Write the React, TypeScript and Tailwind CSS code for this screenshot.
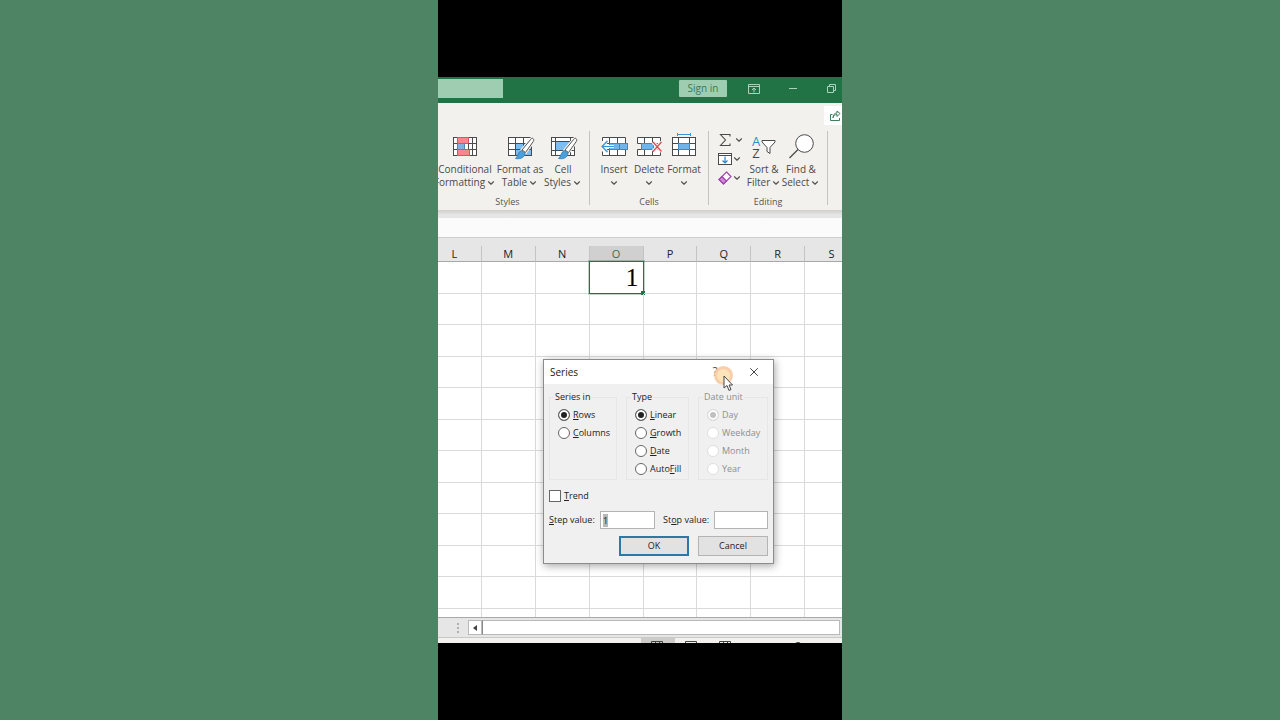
import { useState } from 'react';
import type { ReactNode } from 'react';
import { ChevronDown, X } from 'lucide-react';

const COLUMNS = ['L', 'M', 'N', 'O', 'P', 'Q', 'R', 'S'];
const ROWS = [1, 2, 3, 4, 5, 6, 7, 8, 9, 10, 11, 12];

function Chevron() {
  return <ChevronDown className="h-[10px] w-[10px] shrink-0 text-[#555]" strokeWidth={2.8} />;
}

/* ---------- ribbon icons ---------- */

function Icon({ children }: { children: ReactNode }) {
  return (
    <svg viewBox="0 0 32 32" className="h-8 w-8 shrink-0" fill="none" stroke="#4a4a4a" strokeWidth="1">
      {children}
    </svg>
  );
}

function Brush() {
  return (
    <>
      <path d="M29 7.500C30 8.500 30 9.500 29.200 10.600L21.500 21.500L18 19L26.800 8.300C27.600 7.300 28.300 7 29 7.500Z" fill="#fff" stroke="#f2f1ee" strokeWidth="3" />
      <path d="M29 7.500C30 8.500 30 9.500 29.200 10.600L21.500 21.500L18 19L26.800 8.300C27.600 7.300 28.300 7 29 7.500Z" fill="#fff" stroke="#555" />
      <path d="M17.500 19.500L21 22C21 26 17 28.500 11.500 27.500C14 26 14 20.500 17.500 19.500Z" fill="#4ba0dc" stroke="#2b7ab8" strokeWidth="0.8" />
    </>
  );
}

function ConditionalIcon() {
  return (
    <Icon>
      <rect x="4.500" y="6.500" width="23" height="18" fill="#fff" />
      <path d="M23.500 6.500V24.500M4.500 12.500H27.500M4.500 18.500H27.500" />
      <rect x="8.500" y="6.500" width="11" height="6" fill="#f8868d" stroke="#d8555f" />
      <rect x="8.500" y="12.500" width="7" height="6" fill="#86aee0" stroke="#5a80b8" />
      <rect x="8.500" y="18.500" width="12" height="6" fill="#f8868d" stroke="#d8555f" />
      <path d="M19.500 12.500V18.500" />
    </Icon>
  );
}

function FormatTableIcon() {
  return (
    <Icon>
      <rect x="4.500" y="6.500" width="23" height="18" fill="#fff" />
      <rect x="12" y="12.500" width="15.500" height="12" fill="#7fbdf0" stroke="none" />
      <path d="M11.500 6.500V24.500M19.500 6.500V24.500M4.500 12.500H27.500M4.500 18.500H27.500" />
      <rect x="4.500" y="6.500" width="23" height="18" />
      <Brush />
    </Icon>
  );
}

function CellStylesIcon() {
  return (
    <Icon>
      <rect x="4.500" y="6.500" width="23" height="18" fill="#fff" />
      <rect x="9" y="10.500" width="14.500" height="9" fill="#7fbdf0" stroke="none" />
      <path d="M8.500 6.500V24.500M23.500 6.500V24.500M4.500 10.500H27.500M4.500 19.500H27.500" />
      <Brush />
    </Icon>
  );
}

function InsertIcon() {
  return (
    <Icon>
      <path d="M4.500 10V6.500H27.500V24.500H4.500V20.500" fill="#fff" />
      <path d="M11.500 6.500V24.500M19.500 6.500V24.500M6 12.500H27.500M6 18.500H27.500" />
      <rect x="11.500" y="12.500" width="18" height="6" fill="#6fb4ea" stroke="#3f87be" />
      <path d="M21.500 12.500V18.500" stroke="#3f87be" />
      <path d="M16 15.500H4M9.500 10L4 15.500L9.500 21" stroke="#f2f1ee" strokeWidth="3" />
      <path d="M16 15.500H4M9.500 10L4 15.500L9.500 21" stroke="#3a93d5" strokeWidth="1.200" />
    </Icon>
  );
}

function DeleteIcon() {
  return (
    <Icon>
      <path d="M4.500 6.500H27.500V12.500H4.500ZM4.500 18.500H27.500V24.500H4.500Z" fill="#fff" />
      <path d="M11.500 6.500V12.500M19.500 6.500V12.500M11.500 18.500V24.500M19.500 18.500V24.500" />
      <rect x="8.500" y="12.500" width="12" height="6" fill="#6fb4ea" stroke="#3f87be" />
      <path d="M20 11L28.500 20.500M28.500 11L20 20.500" stroke="#f2f1ee" strokeWidth="3.500" />
      <path d="M20 11L28.500 20.500M28.500 11L20 20.500" stroke="#dc4a50" strokeWidth="1.200" />
    </Icon>
  );
}

function FormatIcon() {
  return (
    <Icon>
      <path d="M9.500 3.500H22.500M9.500 2V5M22.500 2V5" stroke="#3a93d5" />
      <rect x="4.500" y="6.500" width="23" height="18" fill="#fff" />
      <path d="M10.500 6.500V24.500M21.500 6.500V24.500M4.500 12.500H27.500M4.500 18.500H27.500" />
      <rect x="10.500" y="12.500" width="11" height="6" fill="#6fb4ea" stroke="#3f87be" />
    </Icon>
  );
}

function FindIcon() {
  return (
    <Icon>
      <circle cx="19.500" cy="12.500" r="8.800" fill="#fff" />
      <path d="M13 18.500L4.500 27" strokeWidth="1.300" />
    </Icon>
  );
}

function SortIcon() {
  return (
    <span className="flex h-8 items-center justify-center gap-px">
      <span className="flex flex-col text-center text-[13px] leading-3">
        <span className="text-[#2e8fc4]">A</span>
        <span className="text-[#444]">Z</span>
      </span>
      <svg viewBox="0 0 15 16" className="h-4 w-[15px]" fill="#fff" stroke="#4a4a4a" strokeWidth="1">
        <path d="M1 1.500H14V3L9 8.500V14.500L6 12.500V8.500L1 3Z" />
      </svg>
    </span>
  );
}

function SumIcon() {
  return (
    <svg viewBox="0 0 14 14" className="h-[14px] w-[14px]" fill="none" stroke="#4a4a4a" strokeWidth="1.100">
      <path d="M12 3.500V1.500H2.500L7.500 7L2.500 12.500H12V10.500" />
    </svg>
  );
}

function FillIcon() {
  return (
    <svg viewBox="0 0 14 14" className="h-[14px] w-[14px]" fill="#fff" stroke="#4a4a4a" strokeWidth="1">
      <rect x="0.500" y="1.500" width="13" height="11" />
      <path d="M0.500 3.500H13.500" />
      <path d="M7 4.500V11M4.500 8.500L7 11L9.500 8.500" fill="none" stroke="#2b84c6" strokeWidth="1.200" />
    </svg>
  );
}

function ClearIcon() {
  return (
    <svg viewBox="0 0 14 14" className="h-[14px] w-[14px]" fill="#fff" stroke="#9b3fa8" strokeWidth="1.100">
      <path d="M8.500 1L13 5.500L5.500 13L1 8.500Z" />
      <path d="M4 5.500L8.500 10L5.500 13L1 8.500Z" fill="#cf8bd8" />
    </svg>
  );
}

/* ---------- ribbon ---------- */

function RibbonButton({ icon, lines, className }: { icon: ReactNode; lines: string[]; className: string }) {
  return (
    <button className={`flex shrink-0 flex-col items-center text-[10px] leading-[13px] whitespace-nowrap text-[#4a4a4a] ${className}`}>
      {icon}
      <span>{lines[0]}</span>
      <span className="flex h-[13px] items-center gap-px">
        {lines[1]}
        <Chevron />
      </span>
    </button>
  );
}

function RibbonGroup({ label, className, children }: { label: string; className: string; children: ReactNode }) {
  return (
    <div className={`flex shrink-0 flex-col ${className}`}>
      <div className="flex">{children}</div>
      <p className="mt-[7px] text-center text-[9px] leading-3 text-[#555]">{label}</p>
    </div>
  );
}

function Separator() {
  return <div className="h-[74px] w-px shrink-0 bg-[#c6c4c2]" />;
}

function TitleBar() {
  return (
    <header className="flex h-[26px] items-center bg-[#217346] pb-[3px] text-[#a9d3bb]">
      <input aria-label="Search" className="h-[19px] w-[65px] bg-[#9fcdb2]" />
      <button className="mr-[7px] ml-auto h-[17px] w-12 rounded-[1px] bg-[#9fcdb2] text-[10px] leading-[17px] text-[#3c7a58]">Sign in</button>
      <button aria-label="Ribbon display options" className="flex w-[39px] justify-center">
        <svg viewBox="0 0 12 10" className="h-[10px] w-3" fill="none" stroke="currentColor">
          <path d="M0.500 0.500H11.500V9.500H0.500ZM0.500 2.500H11.500M6 8.500V4.500M4 6L6 4L8 6" />
        </svg>
      </button>
      <button aria-label="Minimize" className="flex w-[39px] justify-center">
        <span className="h-px w-2 bg-[#a9d3bb]" />
      </button>
      <button aria-label="Restore" className="flex w-[30px] justify-center pl-2">
        <svg viewBox="0 0 10 10" className="h-[10px] w-[10px]" fill="none" stroke="currentColor">
          <path d="M1.500 2.500H7.500V8.500H1.500ZM3.500 2.500V0.500H9.500V6.500H7.500" />
        </svg>
      </button>
    </header>
  );
}

function Ribbon() {
  return (
    <div className="h-[107px] overflow-hidden bg-[#f2f1ee]">
      <div className="flex h-7 justify-end pt-[3px]">
        <button aria-label="Share" className="flex h-[19px] w-[18px] items-center justify-center bg-white pl-[3px]">
          <svg viewBox="0 0 12 12" className="h-3 w-3" fill="none" stroke="#3d7d5b">
            <path d="M3.500 4.500H1.500V10.500H10.500V8M4 8C4.500 5.500 6 4.500 8 4.500V6.500L11 3.500L8 1V3C5.500 3 4 5 4 8Z" />
          </svg>
        </button>
      </div>
      <div className="flex items-start">
        <RibbonGroup label="Styles" className="-ml-3 w-[163px] [&>div]:pl-[9px]">
          <RibbonButton icon={<ConditionalIcon />} lines={['Conditional', 'Formatting']} className="w-[60px]" />
          <RibbonButton icon={<FormatTableIcon />} lines={['Format as', 'Table']} className="w-[50px]" />
          <RibbonButton icon={<CellStylesIcon />} lines={['Cell', 'Styles']} className="w-9" />
        </RibbonGroup>
        <Separator />
        <RibbonGroup label="Cells" className="w-[118px] [&>div]:justify-center">
          <RibbonButton icon={<InsertIcon />} lines={['Insert']} className="w-[35px]" />
          <RibbonButton icon={<DeleteIcon />} lines={['Delete']} className="w-[35px]" />
          <RibbonButton icon={<FormatIcon />} lines={['Format']} className="w-[35px]" />
        </RibbonGroup>
        <Separator />
        <RibbonGroup label="Editing" className="w-[118px] [&>div]:pl-[9px]">
          <div className="flex w-[27px] flex-col gap-px">
            <button aria-label="AutoSum" className="flex h-[18px] items-center gap-[2px]"><SumIcon /><Chevron /></button>
            <button aria-label="Fill" className="flex h-[18px] items-center"><FillIcon /><Chevron /></button>
            <button aria-label="Clear" className="flex h-[18px] items-center"><ClearIcon /><Chevron /></button>
          </div>
          <RibbonButton icon={<SortIcon />} lines={['Sort &', 'Filter']} className="w-[38px]" />
          <RibbonButton icon={<FindIcon />} lines={['Find &', 'Select']} className="w-9" />
        </RibbonGroup>
        <Separator />
      </div>
    </div>
  );
}

/* ---------- sheet ---------- */

function Sheet() {
  return (
    <div className="h-[380px] overflow-hidden border-t border-[#cfcfcf] bg-[#e6e6e6] pt-2">
      <table className="-ml-[10px] w-[431px] table-fixed border-separate border-spacing-0 bg-white">
        <thead>
          <tr className="h-4 bg-[#e6e6e6]">
            {COLUMNS.map((c) => (
              <th
                key={c}
                className={`h-4 border-r border-b border-r-[#c4c4c4] border-b-[#a8a8a8] p-0 text-[11px] leading-[15px] font-normal ${
                  c === 'O' ? 'bg-[#d0d0d0] text-[#3f6b52]' : 'text-[#222]'
                }`}
              >
                {c}
              </th>
            ))}
          </tr>
        </thead>
        <tbody>
          {ROWS.map((r) => (
            <tr key={r} className="h-8 even:h-[31px]">
              {COLUMNS.map((c) => (
                <td key={c} className="relative border-r border-b border-[#dadada] p-0 text-right font-['Liberation_Serif',serif] text-[26px] leading-[30px] text-black">
                  {c === 'O' && r === 1 && (
                    <>
                      <span className="pr-[4px]">1</span>
                      <span className="absolute -inset-px border border-[#2f6e4b] outline outline-[#2f6e4b]/30" />
                      <span className="absolute -right-[2px] -bottom-[2px] h-1 w-1 bg-[#217346]" />
                    </>
                  )}
                </td>
              ))}
            </tr>
          ))}
        </tbody>
      </table>
    </div>
  );
}

function BottomBars() {
  return (
    <footer>
      <div className="flex h-5 items-center border-t border-[#a9a9a9] bg-[#e6e6e6] pr-[2px] pl-[19px]">
        <svg viewBox="0 0 2 10" className="h-[10px] w-[2px]" fill="#b0b0b0">
          <path d="M0 0H2V2H0ZM0 4H2V6H0ZM0 8H2V10H0Z" />
        </svg>
        <button aria-label="Scroll left" className="ml-[9px] flex h-[15px] w-[14px] items-center justify-center border border-[#b9b9b9] bg-white">
          <svg viewBox="0 0 4 6" className="h-[6px] w-1" fill="#444"><path d="M4 0V6L0 3Z" /></svg>
        </button>
        <div className="h-[15px] flex-1 border border-l-[#8a8a8a] border-[#b9b9b9] bg-white" />
      </div>
      <div className="flex h-[6px] items-start overflow-hidden border-t border-[#c9c9c5] bg-[#f2f1ee] pl-[203px]">
        {['Normal', 'Page layout', 'Page break'].map((view, i) => (
          <button key={view} aria-label={view} className={`flex h-[6px] w-[34px] justify-center pt-[3px] pr-[2px] ${i === 0 ? 'bg-[#cdccc9]' : ''}`}>
            <svg viewBox="0 0 12 10" className="h-[10px] w-3 shrink-0" fill="none" stroke="#444">
              <path d={i === 1 ? 'M0.500 0.500H11.500V9.500H0.500ZM3 2.500H9' : 'M0.500 0.500H11.500V9.500H0.500ZM4.500 0.500V9.500M8.500 0.500V9.500'} />
            </svg>
          </button>
        ))}
        <span className="mt-1 ml-[52px] h-[6px] w-[6px] shrink-0 rounded-full bg-[#444]" />
      </div>
    </footer>
  );
}

/* ---------- dialog ---------- */

// the underlined letter is the keyboard shortcut
function Mnemonic({ text, at }: { text: string; at: number }) {
  if (at < 0) return <>{text}</>;
  return <span>{text.slice(0, at)}<u className="underline-offset-1">{text[at]}</u>{text.slice(at + 1)}</span>;
}

type RadioOption = { text: string; at: number };

function RadioGroup({ legend, options, disabled, className }: { legend: string; options: RadioOption[]; disabled?: boolean; className: string }) {
  const [value, setValue] = useState(options[0].text);
  return (
    <fieldset disabled={disabled} className={`h-[89px] shrink-0 border border-[#e6e6e6] pl-2 ${disabled ? 'text-[#8f8f8f]' : 'text-[#222]'} ${className}`}>
      <legend className="-ml-1 px-px leading-3">{legend}</legend>
      <div className="flex flex-col pt-[3px]">
        {options.map((o) => (
          <label key={o.text} className="flex h-[18px] items-center gap-[3px] whitespace-nowrap">
            <input
              type="radio"
              name={legend}
              checked={value === o.text}
              onChange={() => setValue(o.text)}
              className="h-3 w-3 shrink-0 appearance-none rounded-full border border-[#666] bg-white checked:bg-[#222] checked:shadow-[inset_0_0_0_2px_#fff] disabled:border-[#dedede] disabled:checked:bg-[#c0c0c0]"
            />
            <Mnemonic text={o.text} at={o.at} />
          </label>
        ))}
      </div>
    </fieldset>
  );
}

function SeriesDialog() {
  const [trend, setTrend] = useState(false);
  const [step, setStep] = useState('1');
  const [stop, setStop] = useState('');

  return (
    <div role="dialog" aria-label="Series" className="absolute top-[282px] left-[105px] w-[231px] border border-[#8c8c8c] bg-[#f0f0f0] text-[9px] text-[#222] shadow-[1px_2px_8px_rgba(0,0,0,0.35)]">
      <div className="flex h-6 items-center bg-white pr-3 pl-[6px]">
        <h2 className="text-[10px] leading-3">Series</h2>
        <button aria-label="Help" className="ml-auto w-3 text-[12px] leading-3 text-[#555]">?</button>
        <button aria-label="Close" className="ml-[26px]"><X className="h-[14px] w-[14px] text-[#444]" strokeWidth={1.7} /></button>
      </div>

      <form onSubmit={(e) => e.preventDefault()} className="px-[5px] pt-[7px] pb-[7px]">
        <div className="flex gap-[9px]">
          <RadioGroup legend="Series in" className="w-[68px]" options={[{ text: 'Rows', at: 0 }, { text: 'Columns', at: 0 }]} />
          <RadioGroup
            legend="Type"
            className="w-[63px]"
            options={[{ text: 'Linear', at: 0 }, { text: 'Growth', at: 0 }, { text: 'Date', at: 0 }, { text: 'AutoFill', at: 4 }]}
          />
          <RadioGroup
            legend="Date unit"
            disabled
            className="w-[70px]"
            options={[{ text: 'Day', at: -1 }, { text: 'Weekday', at: -1 }, { text: 'Month', at: -1 }, { text: 'Year', at: -1 }]}
          />
        </div>

        <label className="mt-[9px] flex h-[14px] w-max items-center gap-[3px]">
          <input type="checkbox" checked={trend} onChange={(e) => setTrend(e.target.checked)} className="h-3 w-3 appearance-none border border-[#666] bg-white checked:bg-[#222] checked:shadow-[inset_0_0_0_2px_#fff]" />
          <Mnemonic text="Trend" at={0} />
        </label>

        <div className="mt-2 flex h-[18px] items-center">
          <label htmlFor="step" className="w-[51px] whitespace-nowrap"><Mnemonic text="Step value:" at={0} /></label>
          <input
            id="step"
            value={step}
            autoFocus
            onFocus={(e) => e.target.select()}
            onChange={(e) => setStep(e.target.value)}
            className="h-[18px] w-[55px] border border-[#b4b4b4] bg-white px-[2px] outline-none selection:bg-[#b8b8b8] selection:text-[#222]"
          />
          <label htmlFor="stop" className="ml-2 w-[51px] whitespace-nowrap"><Mnemonic text="Stop value:" at={2} /></label>
          <input id="stop" value={stop} onChange={(e) => setStop(e.target.value)} className="h-[18px] w-[54px] border border-[#b4b4b4] bg-white px-[2px] outline-none" />
        </div>

        <div className="mt-[7px] flex justify-end gap-[9px]">
          <button type="submit" className="h-5 w-[70px] border-2 border-[#2e78a6] bg-[#e2e2e2]">OK</button>
          <button type="button" className="h-5 w-[70px] border border-[#b4b4b4] bg-[#e2e2e2]">Cancel</button>
        </div>
      </form>

      {/* click highlight and pointer */}
      <span className="absolute top-[6px] left-[170px] h-[19px] w-[19px] rounded-full border-3 border-[#f6c3a0]/60 bg-[#fad79c]/70" />
      <svg viewBox="0 0 11 17" className="absolute top-[15px] left-[179px] h-[17px] w-[11px]" fill="#fff" stroke="#444">
        <path d="M1 1V13L4 10.500L6 15.500L8 14.500L6 10H9.500Z" />
      </svg>
    </div>
  );
}

export default function App() {
  return (
    <div className="min-h-screen bg-[#4e8364] font-['Open_Sans','Noto_Sans',sans-serif]">
      <main className="mx-auto flex min-h-screen w-full max-w-[404px] flex-col justify-center bg-black">
        <div className="relative overflow-hidden bg-[#e6e6e6]">
          <TitleBar />
          <Ribbon />
          <div className="h-2 bg-linear-to-b from-[#cfcecb] to-[#e6e6e6] to-60%" />
          <input aria-label="Formula bar" className="block h-[19px] w-full bg-[#fbfbfb]" />
          <Sheet />
          <BottomBars />
          <SeriesDialog />
        </div>
      </main>
    </div>
  );
}
